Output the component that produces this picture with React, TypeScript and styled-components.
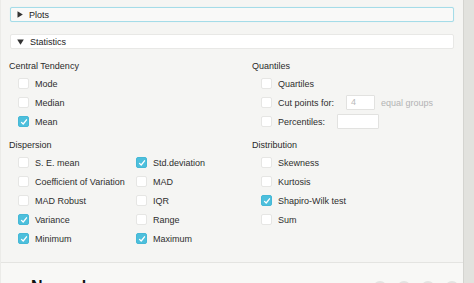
import React from "react";
import styled, { createGlobalStyle } from "styled-components";

const Global = createGlobalStyle`
  html, body { margin: 0; padding: 0; background: #f5f5f3; }
  body { font-family: "Liberation Sans", Arial, sans-serif; font-size: 9px; color: #2e2e2e; }
  * { box-sizing: border-box; }
`;

const Page = styled.div`
  display: flex;
  width: 474px;
  height: 283px;
  overflow: hidden;
`;

const Main = styled.div`
  width: 463px;
  display: flex;
  flex-direction: column;
  border-left: 1px solid #ebebe8;
  overflow: hidden;
`;

const ScrollStrip = styled.div`
  width: 11px;
  background: #e2e2de;
  border-left: 1px solid #d4d4d0;
`;

const Content = styled.div`
  flex: none;
  height: 263px;
  padding: 7px 9px 0 8px;
  border-bottom: 1px solid #e4e4e1;
  display: flex;
  flex-direction: column;
`;

const HeaderBox = styled.div<{ $focused?: boolean }>`
  height: 15px;
  margin-left: 1px;
  display: flex;
  align-items: center;
  gap: 6px;
  padding-left: 6px;
  border-radius: 2px;
  background: ${(p) => (p.$focused ? "#f9f9f8" : "#ffffff")};
  border: 1px solid ${(p) => (p.$focused ? "#a5dce8" : "#e8e8e6")};
  box-shadow: ${(p) => (p.$focused ? "0 0 1px #bfe7ef" : "none")};
  & + & { margin-top: 12px; }
  color: #222;
`;

const Options = styled.div`
  margin-top: 10px;
  display: grid;
  grid-template-columns: 243px 1fr;
  row-gap: 7px;
`;

const Group = styled.div``;

const Title = styled.div`
  height: 15px;
  line-height: 15px;
  color: #2a2a2a;
`;

const List = styled.div<{ $cols?: number }>`
  padding-left: 9px;
  display: grid;
  grid-template-columns: ${(p) => (p.$cols === 2 ? "118px 1fr" : "1fr")};
  grid-auto-rows: 19px;
`;

const Item = styled.label`
  display: flex;
  align-items: center;
  gap: 6px;
  height: 19px;
  color: #2e2e2e;
`;

const Box = styled.span<{ $checked?: boolean }>`
  width: 11px;
  height: 11px;
  flex: none;
  border-radius: 2px;
  display: flex;
  align-items: center;
  justify-content: center;
  background: ${(p) => (p.$checked ? "#4dbfdc" : "#ffffff")};
  border: 1px solid ${(p) => (p.$checked ? "#45b8d6" : "#e6e6e4")};
`;

const Field = styled.span<{ $w: number }>`
  width: ${(p) => p.$w}px;
  height: 15px;
  margin-left: 6px;
  background: #fff;
  border: 1px solid #e2e2e0;
  border-radius: 1px;
  color: #b9b9b9;
  padding-left: 4px;
  line-height: 13px;
`;

const Hint = styled.span`
  color: #b3b3b3;
`;

const Footer = styled.div`
  flex: 1;
  min-height: 0;
  overflow: hidden;
  background: #f8f8f6;
  display: flex;
  align-items: flex-start;
  padding: 15px 0 0 0;
`;

const FooterTitle = styled.div`
  font-size: 16px;
  line-height: 18px;
  font-weight: bold;
  color: #111;
  display: flex;
  gap: 14px;
  flex: 1;
  flex-shrink: 0;
`;

const Circles = styled.div`
  display: flex;
  gap: 10px;
  margin: 3px 4px 0 0;
  flex-shrink: 0;
`;

const Circle = styled.span`
  width: 14px;
  height: 14px;
  border-radius: 50%;
  background: #e3e3e1;
`;

const Check = () => (
  <svg width="8" height="8" viewBox="0 0 8 8">
    <path d="M1.5 4.4 L3.2 6 L6.5 1.8" fill="none" stroke="#fff" strokeWidth="1.3" strokeLinecap="round" strokeLinejoin="round" />
  </svg>
);

const Opt = ({ label, checked, children }: { label: string; checked?: boolean; children?: React.ReactNode }) => (
  <Item>
    <Box $checked={checked}>{checked && <Check />}</Box>
    <span>{label}</span>
    {children}
  </Item>
);

const Right = () => (
  <svg width="6" height="7" viewBox="0 0 6 7"><path d="M0.5 0.3 L5.8 3.5 L0.5 6.7 Z" fill="#333" /></svg>
);
const Down = () => (
  <svg width="7" height="6" viewBox="0 0 7 6"><path d="M0.2 0.5 L6.8 0.5 L3.5 5.8 Z" fill="#333" /></svg>
);

export default function App() {
  return (
    <Page>
      <Global />
      <Main>
        <Content>
          <HeaderBox $focused><Right /><span>Plots</span></HeaderBox>
          <HeaderBox><Down /><span>Statistics</span></HeaderBox>
          <Options>
            <Group>
              <Title>Central Tendency</Title>
              <List>
                <Opt label="Mode" />
                <Opt label="Median" />
                <Opt label="Mean" checked />
              </List>
            </Group>
            <Group>
              <Title>Quantiles</Title>
              <List>
                <Opt label="Quartiles" />
                <Opt label="Cut points for:">
                  <Field $w={29}>4</Field>
                  <Hint>equal groups</Hint>
                </Opt>
                <Opt label="Percentiles:">
                  <Field $w={42} />
                </Opt>
              </List>
            </Group>
            <Group>
              <Title>Dispersion</Title>
              <List $cols={2}>
                <Opt label="S. E. mean" />
                <Opt label="Std.deviation" checked />
                <Opt label="Coefficient of Variation" />
                <Opt label="MAD" />
                <Opt label="MAD Robust" />
                <Opt label="IQR" />
                <Opt label="Variance" checked />
                <Opt label="Range" />
                <Opt label="Minimum" checked />
                <Opt label="Maximum" checked />
              </List>
            </Group>
            <Group>
              <Title>Distribution</Title>
              <List>
                <Opt label="Skewness" />
                <Opt label="Kurtosis" />
                <Opt label="Shapiro-Wilk test" checked />
                <Opt label="Sum" />
              </List>
            </Group>
          </Options>
        </Content>
        <Footer>
          <FooterTitle>
            <span style={{ width: 16 }} />
            <span>Normal</span>
          </FooterTitle>
          <Circles>
            <Circle /><Circle /><Circle /><Circle />
          </Circles>
        </Footer>
      </Main>
      <ScrollStrip />
    </Page>
  );
}
